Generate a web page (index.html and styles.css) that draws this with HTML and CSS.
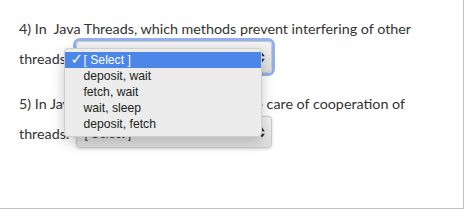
FILE: index.html
```html
<!DOCTYPE html>
<html lang="en">
  <head>
    <meta charset="UTF-8" />
    <meta name="viewport" content="width=device-width, initial-scale=1.0" />
    <title>Quiz - Java Threads</title>
    <link rel="stylesheet" href="styles.css">
  </head>
  <body>
    <div class="quiz">
      <p class="question">
        4) In&nbsp; Java Threads, which methods prevent interfering of other
        threads:<span class="select-wrap"><span class="select-box focused"><span class="select-text">[ Select ]</span><svg class="arrows" width="6" height="11" viewBox="0 0 6 11"><path d="M3 0.5 L5.8 4.3 L0.2 4.3 Z M3 10.5 L5.8 6.7 L0.2 6.7 Z" fill="#2a2a2a"/></svg></span><!-- lista desplegada del primer select --><span class="dropdown">
            <span class="option selected"><span class="check">✓</span>[ Select ]</span>
            <span class="option">deposit, wait</span>
            <span class="option">fetch, wait</span>
            <span class="option">wait, sleep</span>
            <span class="option">deposit, fetch</span>
          </span></span>
      </p>
      <p class="question">
        5) In Java Threads, which methods take care of cooperation of<br>
        threads:<span class="select-box"><span class="select-text">[ Select ]</span><svg class="arrows" width="6" height="11" viewBox="0 0 6 11"><path d="M3 0.5 L5.8 4.3 L0.2 4.3 Z M3 10.5 L5.8 6.7 L0.2 6.7 Z" fill="#2a2a2a"/></svg></span>
      </p>
    </div>
  </body>
</html>
```

FILE: styles.css
```css
body {
  margin: 0;
  padding: 0;
  background: #fff;
  font-family: Lato, "Open Sans", sans-serif;
}
.quiz {
  width: 464px;
  height: 209px;
  box-sizing: border-box;
  border-right: 1px solid #c2c2c2;
  border-bottom: 1px solid #c2c2c2;
  padding: 14px 0 0 19px;
}
.question {
  margin: 0 0 15px;
  font-size: 14.3px;
  line-height: 30px;
  color: #333;
}
.select-wrap {
  position: relative;
  display: inline-block;
  vertical-align: top;
}
.select-box {
  display: inline-flex;
  align-items: center;
  justify-content: space-between;
  vertical-align: top;
  box-sizing: border-box;
  width: 196px;
  height: 32px;
  margin: -3px 0 0 7px;
  padding: 3px 6px 0 7px;
  border: 1px solid #c9c9c9;
  border-radius: 4px;
  background: linear-gradient(#f4f4f4, #dedede);
  box-shadow: 0 1px 3px rgba(0, 0, 0, 0.18);
  font-family: "Liberation Sans", Arial, sans-serif;
  font-size: 12px;
  line-height: 16px;
  color: #333;
}
.arrows {
  margin-top: -3px;
}
.select-box.focused {
  box-shadow: 0 0 0 3px rgba(110, 150, 230, 0.75);
}
.dropdown {
  position: absolute;
  left: -5px;
  top: 4px;
  display: block;
  width: 198px;
  padding: 3px 0 4px;
  box-sizing: border-box;
  background: #ececec;
  border: 1px solid #cfcfcf;
  border-radius: 4px;
  box-shadow: 0 5px 14px rgba(0, 0, 0, 0.22);
  font-family: "Liberation Sans", Arial, sans-serif;
  font-size: 12.2px;
  line-height: 16px;
  color: #222;
}
.option {
  display: block;
  height: 16px;
  padding-left: 18px;
}
.option.selected {
  position: relative;
  background: #4d86e9;
  color: #fff;
}
.check {
  position: absolute;
  left: 5px;
  top: -1px;
  font-family: "DejaVu Sans", sans-serif;
  font-size: 15px;
  line-height: 17px;
}
```
